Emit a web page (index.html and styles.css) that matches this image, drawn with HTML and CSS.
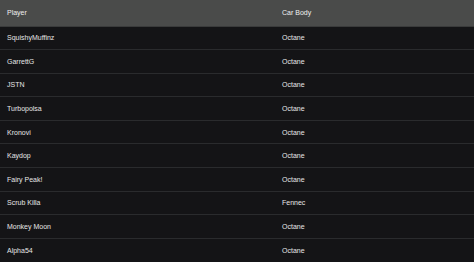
FILE: index.html
```html
<!DOCTYPE html>
<html>
<head>
  <meta charset="utf-8">
  <title>Car Bodies</title>
  <link rel="stylesheet" href="styles.css">
</head>
<body>
  <table class="car-table">
    <thead>
      <tr>
        <th class="col-player">Player</th>
        <th class="col-car">Car Body</th>
      </tr>
    </thead>
    <tbody>
      <tr><td>SquishyMuffinz</td><td>Octane</td></tr>
      <tr><td>GarrettG</td><td>Octane</td></tr>
      <tr><td>JSTN</td><td>Octane</td></tr>
      <tr><td>Turbopolsa</td><td>Octane</td></tr>
      <tr><td>Kronovi</td><td>Octane</td></tr>
      <tr><td>Kaydop</td><td>Octane</td></tr>
      <tr><td>Fairy Peak!</td><td>Octane</td></tr>
      <tr><td>Scrub Killa</td><td>Fennec</td></tr>
      <tr><td>Monkey Moon</td><td>Octane</td></tr>
      <tr><td>Alpha54</td><td>Octane</td></tr>
    </tbody>
  </table>
</body>
</html>
```

FILE: styles.css
```css
* {
  margin: 0;
  padding: 0;
  box-sizing: border-box;
}

body {
  background: #141416;
  font-family: "Liberation Sans", Arial, sans-serif;
  color: #e6e6e6;
}

.car-table {
  width: 474px;
  border-collapse: collapse;
  table-layout: fixed;
}

.col-player {
  width: 275px;
}

.car-table th {
  height: 26px;
  background: #4a4b4a;
  border-bottom: 1px solid #3a3b3b;
  color: #f0f0f0;
  font-size: 7px;
  font-weight: normal;
  text-align: left;
  padding: 0 7px;
}

.car-table td {
  height: 23.6px;
  font-size: 7px;
  padding: 0 7px;
  border-bottom: 1px solid #2a2b2d;
}

.car-table tbody tr:last-child td {
  border-bottom: none;
}
```
